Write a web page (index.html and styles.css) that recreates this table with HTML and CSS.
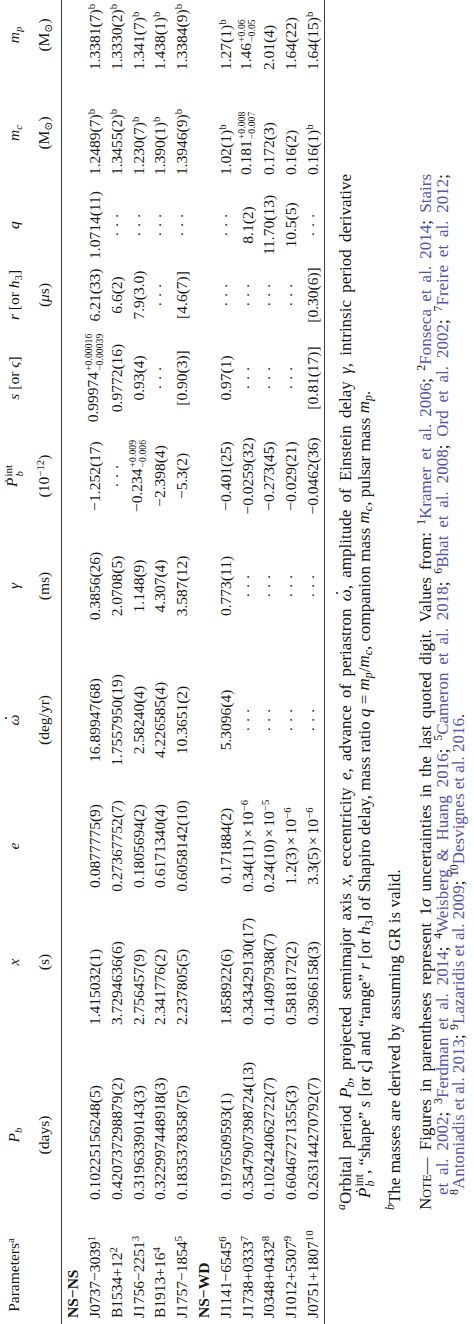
FILE: index.html
```html
<!DOCTYPE html>
<html>
<head>
<meta charset="utf-8">
<link rel="stylesheet" href="styles.css">
</head>
<body>
<div class="page">
<div class="sheet">
  <div class="tbl">
    <div class="row head">
      <div><span>Parameters<sup>a</sup></span></div>
      <div><span><i>P<sub>b</sub></i></span></div>
      <div><span><i>x</i></span></div>
      <div><span><i>e</i></span></div>
      <div><span><i class="od">ω</i></span></div>
      <div><span><i>γ</i></span></div>
      <div><span><i>Ṗ</i><span class="ss"><span>int</span><span><i>b</i></span></span></span></div>
      <div><span><i>s</i> [or <i>ς</i>]</span></div>
      <div><span><i>r</i> [or <i>h</i><sub>3</sub>]</span></div>
      <div><span><i>q</i></span></div>
      <div><span><i>m<sub>c</sub></i></span></div>
      <div><span><i>m<sub>p</sub></i></span></div>
    </div>
    <div class="row units">
      <div></div>
      <div>(days)</div>
      <div>(s)</div>
      <div></div>
      <div>(deg/yr)</div>
      <div>(ms)</div>
      <div><span>(10<sup>−12</sup>)</span></div>
      <div></div>
      <div><span>(<i>μ</i>s)</span></div>
      <div></div>
      <div><span>(M<sub>⊙</sub>)</span></div>
      <div><span>(M<sub>⊙</sub>)</span></div>
    </div>
    <div class="rule"></div>
    <div class="row sect"><div>NS−NS</div></div>
    <div class="row data">
      <div><span>J0737−3039<sup>1</sup></span></div>
      <div>0.10225156248(5)</div>
      <div>1.415032(1)</div>
      <div>0.0877775(9)</div>
      <div>16.89947(68)</div>
      <div>0.3856(26)</div>
      <div>−1.252(17)</div>
      <div><span>0.99974<span class="pm"><span>+0.00016</span><span>−0.00039</span></span></span></div>
      <div>6.21(33)</div>
      <div>1.0714(11)</div>
      <div><span>1.2489(7)<sup>b</sup></span></div>
      <div><span>1.3381(7)<sup>b</sup></span></div>
    </div>
    <div class="row data">
      <div><span>B1534+12<sup>2</sup></span></div>
      <div>0.420737298879(2)</div>
      <div>3.7294636(6)</div>
      <div>0.27367752(7)</div>
      <div>1.7557950(19)</div>
      <div>2.0708(5)</div>
      <div>· · ·</div>
      <div>0.9772(16)</div>
      <div>6.6(2)</div>
      <div>· · ·</div>
      <div><span>1.3455(2)<sup>b</sup></span></div>
      <div><span>1.3330(2)<sup>b</sup></span></div>
    </div>
    <div class="row data">
      <div><span>J1756−2251<sup>3</sup></span></div>
      <div>0.31963390143(3)</div>
      <div>2.756457(9)</div>
      <div>0.1805694(2)</div>
      <div>2.58240(4)</div>
      <div>1.148(9)</div>
      <div><span>−0.234<span class="pm"><span>+0.009</span><span>−0.006</span></span></span></div>
      <div>0.93(4)</div>
      <div>7.9(3.0)</div>
      <div>· · ·</div>
      <div><span>1.230(7)<sup>b</sup></span></div>
      <div><span>1.341(7)<sup>b</sup></span></div>
    </div>
    <div class="row data">
      <div><span>B1913+16<sup>4</sup></span></div>
      <div>0.322997448918(3)</div>
      <div>2.341776(2)</div>
      <div>0.6171340(4)</div>
      <div>4.226585(4)</div>
      <div>4.307(4)</div>
      <div>−2.398(4)</div>
      <div>· · ·</div>
      <div>· · ·</div>
      <div>· · ·</div>
      <div><span>1.390(1)<sup>b</sup></span></div>
      <div><span>1.438(1)<sup>b</sup></span></div>
    </div>
    <div class="row data">
      <div><span>J1757−1854<sup>5</sup></span></div>
      <div>0.18353783587(5)</div>
      <div>2.237805(5)</div>
      <div>0.6058142(10)</div>
      <div>10.3651(2)</div>
      <div>3.587(12)</div>
      <div>−5.3(2)</div>
      <div>[0.90(3)]</div>
      <div>[4.6(7)]</div>
      <div>· · ·</div>
      <div><span>1.3946(9)<sup>b</sup></span></div>
      <div><span>1.3384(9)<sup>b</sup></span></div>
    </div>
    <div class="row sect"><div>NS−WD</div></div>
    <div class="row data">
      <div><span>J1141−6545<sup>6</sup></span></div>
      <div>0.1976509593(1)</div>
      <div>1.858922(6)</div>
      <div>0.171884(2)</div>
      <div>5.3096(4)</div>
      <div>0.773(11)</div>
      <div>−0.401(25)</div>
      <div>0.97(1)</div>
      <div>· · ·</div>
      <div>· · ·</div>
      <div><span>1.02(1)<sup>b</sup></span></div>
      <div><span>1.27(1)<sup>b</sup></span></div>
    </div>
    <div class="row data">
      <div><span>J1738+0333<sup>7</sup></span></div>
      <div>0.3547907398724(13)</div>
      <div>0.343429130(17)</div>
      <div><span>0.34(11)<span class="x">×</span>10<sup>−6</sup></span></div>
      <div>· · ·</div>
      <div>· · ·</div>
      <div>−0.0259(32)</div>
      <div>· · ·</div>
      <div>· · ·</div>
      <div>8.1(2)</div>
      <div><span>0.181<span class="pm"><span>+0.008</span><span>−0.007</span></span></span></div>
      <div><span>1.46<span class="pm"><span>+0.06</span><span>−0.05</span></span></span></div>
    </div>
    <div class="row data">
      <div><span>J0348+0432<sup>8</sup></span></div>
      <div>0.102424062722(7)</div>
      <div>0.14097938(7)</div>
      <div><span>0.24(10)<span class="x">×</span>10<sup>−5</sup></span></div>
      <div>· · ·</div>
      <div>· · ·</div>
      <div>−0.273(45)</div>
      <div>· · ·</div>
      <div>· · ·</div>
      <div>11.70(13)</div>
      <div>0.172(3)</div>
      <div>2.01(4)</div>
    </div>
    <div class="row data">
      <div><span>J1012+5307<sup>9</sup></span></div>
      <div>0.60467271355(3)</div>
      <div>0.5818172(2)</div>
      <div><span>1.2(3)<span class="x">×</span>10<sup>−6</sup></span></div>
      <div>· · ·</div>
      <div>· · ·</div>
      <div>−0.029(21)</div>
      <div>· · ·</div>
      <div>· · ·</div>
      <div>10.5(5)</div>
      <div>0.16(2)</div>
      <div>1.64(22)</div>
    </div>
    <div class="row data">
      <div><span>J0751+1807<sup>10</sup></span></div>
      <div>0.263144270792(7)</div>
      <div>0.3966158(3)</div>
      <div><span>3.3(5)<span class="x">×</span>10<sup>−6</sup></span></div>
      <div>· · ·</div>
      <div>· · ·</div>
      <div>−0.0462(36)</div>
      <div>[0.81(17)]</div>
      <div>[0.30(6)]</div>
      <div>· · ·</div>
      <div><span>0.16(1)<sup>b</sup></span></div>
      <div><span>1.64(15)<sup>b</sup></span></div>
    </div>
    <div class="rule"></div>
  </div>

  <div class="notes">
    <div class="note-a">
      <div class="ln full"><sup><i>a</i></sup>Orbital period <i>P<sub>b</sub></i>, projected semimajor axis <i>x</i>, eccentricity <i>e</i>, advance of periastron <i class="od">ω</i>, amplitude of Einstein delay <i>γ</i>, intrinsic period derivative</div>
      <div class="ln cont"><i>Ṗ</i><span class="ss"><span>int</span><span><i>b</i></span></span>, “shape” <i>s</i> [or <i>ς</i>] and “range” <i>r</i> [or <i>h</i><sub>3</sub>] of Shapiro delay, mass ratio <i>q</i> = <i>m<sub>p</sub></i>/<i>m<sub>c</sub></i>, companion mass <i>m<sub>c</sub></i>, pulsar mass <i>m<sub>p</sub></i>.</div>
    </div>
    <div class="note-b">
      <div class="ln"><sup><i>b</i></sup>The masses are derived by assuming GR is valid.</div>
    </div>
    <div class="note-c">
      <div class="ln full"><span class="sc">Note</span>— Figures in parentheses represent 1<i>σ</i> uncertainties in the last quoted digit. Values from: <sup>1</sup><span class="cite">Kramer et al. 2006</span>; <sup>2</sup><span class="cite">Fonseca et al. 2014</span>; <span class="cite">Stairs</span></div>
      <div class="ln full cont2"><span class="cite">et al. 2002</span>; <sup>3</sup><span class="cite">Ferdman et al. 2014</span>; <sup>4</sup><span class="cite">Weisberg &amp; Huang 2016</span>; <sup>5</sup><span class="cite">Cameron et al. 2018</span>; <sup>6</sup><span class="cite">Bhat et al. 2008</span>; <span class="cite">Ord et al. 2002</span>; <sup>7</sup><span class="cite">Freire et al. 2012</span>;</div>
      <div class="ln cont2"><sup>8</sup><span class="cite">Antoniadis et al. 2013</span>; <sup>9</sup><span class="cite">Lazaridis et al. 2009</span>; <sup>10</sup><span class="cite">Desvignes et al. 2016</span>.</div>
    </div>
  </div>
</div>
</div>
</body>
</html>
```

FILE: styles.css
```css
html, body {
  margin: 0;
  padding: 0;
  background: #ffffff;
}

.page {
  width: 474px;
  height: 1324px;
  overflow: hidden;
}

.sheet {
  width: 1324px;
  height: 474px;
  transform-origin: 0 0;
  transform: translateY(1324px) rotate(-90deg);
  font-family: "Liberation Serif", "DejaVu Serif", serif;
  font-size: 15.5px;
  color: #161616;
}

.tbl {
  width: 1340px;
}

/* column boxes (x along the table):
   0:[6,92] 1:[124,254] 2:[299,425] 3:[429,527] 4:[554,654] 5:[698,778]
   6:[800,896] 7:[900,992] 8:[1004,1054] 9:[1066,1132] 10:[1149,1233] 11:[1254,1324] */
.row {
  display: grid;
  grid-template-columns: 118px 175px 130px 125px 144px 102px 100px 104px 62px 83px 105px 80px;
  padding-left: 6px;
  align-items: center;
  white-space: nowrap;
  line-height: 1;
}

.row > * {
  display: flex;
  justify-content: center;
  align-items: center;
}

.row > :nth-child(1)  { margin-right: 32px; }
.row > :nth-child(2)  { margin-right: 45px; }
.row > :nth-child(3)  { margin-right: 4px; }
.row > :nth-child(4)  { margin-right: 27px; }
.row > :nth-child(5)  { margin-right: 44px; }
.row > :nth-child(6)  { margin-right: 22px; }
.row > :nth-child(7)  { margin-right: 4px; }
.row > :nth-child(8)  { margin-right: 12px; }
.row > :nth-child(9)  { margin-right: 12px; }
.row > :nth-child(10) { margin-right: 17px; }
.row > :nth-child(11) { margin-right: 21px; }
.row > :nth-child(12) { margin-right: 10px; }

.data > :nth-child(1),
.data > :nth-child(2),
.data > :nth-child(3),
.data > :nth-child(11),
.data > :nth-child(12) {
  justify-content: flex-start;
}

.head {
  height: 27px;
}

.units {
  height: 34px;
}

.data {
  height: 21.8px;
}

.sect {
  height: 21.8px;
  font-weight: bold;
}

.sect > div {
  grid-column: 1 / -1;
  justify-content: flex-start;
  margin-right: 0;
}

.rule {
  height: 1px;
  background: #3a3a3a;
}

sup {
  font-size: 0.7em;
  line-height: 0;
  vertical-align: 0.5em;
}

sub {
  font-size: 0.7em;
  line-height: 0;
  vertical-align: -0.25em;
}

.ss {
  display: inline-flex;
  flex-direction: column;
  font-size: 0.7em;
  line-height: 1;
  vertical-align: middle;
  margin-left: 1px;
}

.pm {
  display: inline-flex;
  flex-direction: column;
  font-size: 0.63em;
  line-height: 1.1;
  vertical-align: middle;
  margin-left: 1px;
}

.x {
  margin: 0 2px;
}

.od {
  position: relative;
  display: inline-block;
}

.od::after {
  content: "";
  position: absolute;
  left: 58%;
  top: -0.02em;
  width: 2px;
  height: 2px;
  border-radius: 50%;
  background: currentColor;
}

.notes {
  margin-top: 12px;
  margin-left: 114px;
  width: 1036px;
  font-size: 17px;
  line-height: 17px;
}

.ln {
  white-space: normal;
}

.full {
  text-align: justify;
  text-align-last: justify;
}

.note-a .cont {
  padding-left: 12px;
}

.note-b {
  margin-top: 9px;
}

.note-c {
  margin-top: 15px;
  line-height: 16.5px;
}

.note-c .cont2 {
  padding-left: 15px;
}

.sc {
  font-variant: small-caps;
}

.cite {
  color: #5656a8;
}
```
